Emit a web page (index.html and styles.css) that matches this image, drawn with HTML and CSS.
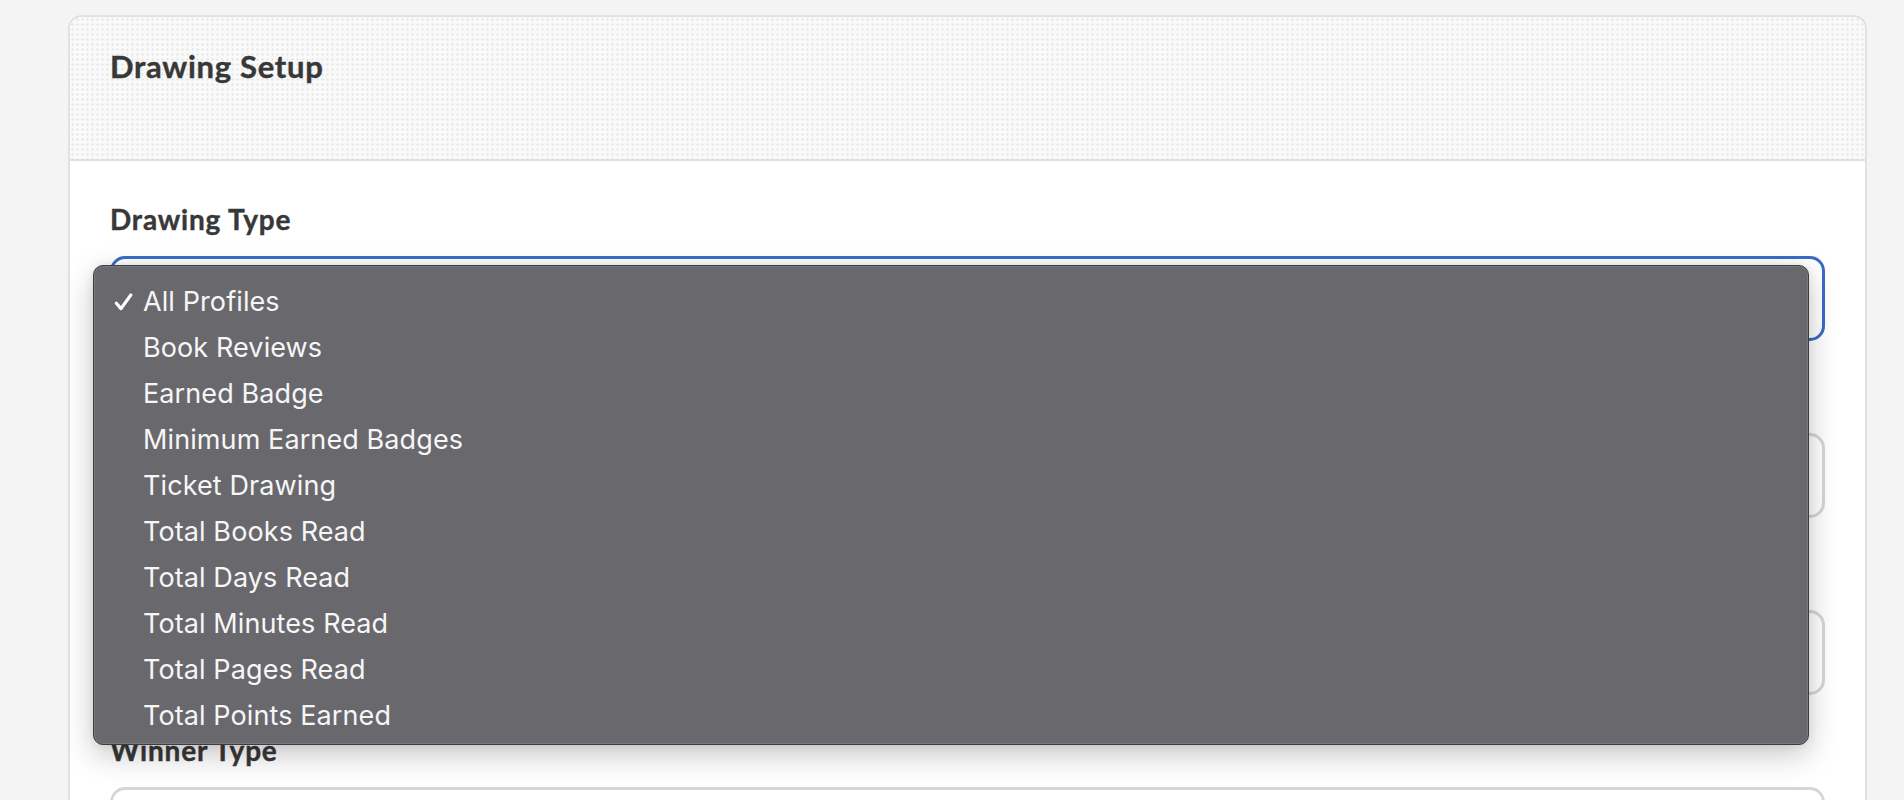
FILE: index.html
```html
<!DOCTYPE html>
<html lang="en">
<head>
<meta charset="utf-8">
<title>Drawing Setup</title>
<link rel="stylesheet" href="styles.css">
</head>
<body>
<div class="card">
  <div class="card-header">
    <h2 class="title">Drawing Setup</h2>
  </div>
  <div class="card-body">
    <div class="field">
      <label class="label">Drawing Type</label>
      <div class="select-wrap">
        <div class="select focused">All Profiles</div>
        <div class="menu">
          <div class="item checked"><svg class="check" viewBox="0 0 20 18" width="20" height="18"><path d="M2.4 10.2 L7 15.6 L16.8 2" fill="none" stroke="#fff" stroke-width="3.2" stroke-linecap="round" stroke-linejoin="round"/></svg>All Profiles</div>
          <div class="item">Book Reviews</div>
          <div class="item">Earned Badge</div>
          <div class="item">Minimum Earned Badges</div>
          <div class="item">Ticket Drawing</div>
          <div class="item">Total Books Read</div>
          <div class="item">Total Days Read</div>
          <div class="item">Total Minutes Read</div>
          <div class="item">Total Pages Read</div>
          <div class="item">Total Points Earned</div>
        </div>
      </div>
    </div>
    <div class="field">
      <label class="label">Drawing Name</label>
      <div class="select"></div>
    </div>
    <div class="field">
      <label class="label">Number of Winners</label>
      <div class="select"></div>
    </div>
    <div class="field">
      <label class="label">Winner Type</label>
      <div class="select"></div>
    </div>
  </div>
</div>
</body>
</html>
```
FILE: styles.css
```css
html, body {
  margin: 0;
  padding: 0;
}
body {
  background: #f4f4f4;
  font-family: Lato, "Open Sans", sans-serif;
  color: #383838;
  height: 800px;
  overflow: hidden;
}
.card {
  margin: 15px 37px 0 68px;
  background: #fff;
  border: 2px solid #e1e1e1;
  border-radius: 14px;
  height: 900px;
}
.card-header {
  height: 144px;
  box-sizing: border-box;
  padding: 32px 40px 0;
  border-bottom: 2px solid #e1e1e1;
  border-radius: 12px 12px 0 0;
  background-color: #f9f9f9;
  background-image: radial-gradient(circle, #e9e9e9 1px, transparent 1.4px);
  background-size: 5px 5px;
}
.title {
  margin: 0;
  font: 700 31px/34px Lato, sans-serif;
  letter-spacing: 0.7px;
  color: #383838;
  -webkit-text-stroke: 0.4px #383838;
}
.card-body {
  padding: 42px 40px 0;
}
.field {
  margin-bottom: 39px;
}
.label {
  display: block;
  font: 700 28px/32px Lato, sans-serif;
  letter-spacing: 0.8px;
  color: #383838;
  margin-bottom: 21px;
  -webkit-text-stroke: 0.4px #383838;
}
.select-wrap {
  position: relative;
}
.select {
  height: 85px;
  box-sizing: border-box;
  border: 3px solid #d6d6d6;
  border-radius: 15px;
  background: #fff;
  font: 400 26px/79px Inter, sans-serif;
  padding-left: 28px;
  color: #333;
}
.select.focused {
  border-color: #3b6bc6;
}
.menu {
  position: absolute;
  left: -17px;
  top: 9px;
  width: 1716px;
  height: 480px;
  box-sizing: border-box;
  padding: 13px 0 7px;
  background: #69686d;
  border: 1px solid #3c3c3e;
  border-radius: 10px;
  box-shadow: inset 0 0 0 1px rgba(255,255,255,0.12), 0 10px 30px rgba(0,0,0,0.22), 0 0 8px rgba(0,0,0,0.08);
}
.item {
  position: relative;
  height: 46px;
  padding-left: 49px;
  font: 400 27px/46px Inter, sans-serif;
  letter-spacing: 0.1px;
  color: #f6f6f6;
  white-space: nowrap;
}
.check {
  position: absolute;
  left: 20px;
  top: 14px;
}
```
